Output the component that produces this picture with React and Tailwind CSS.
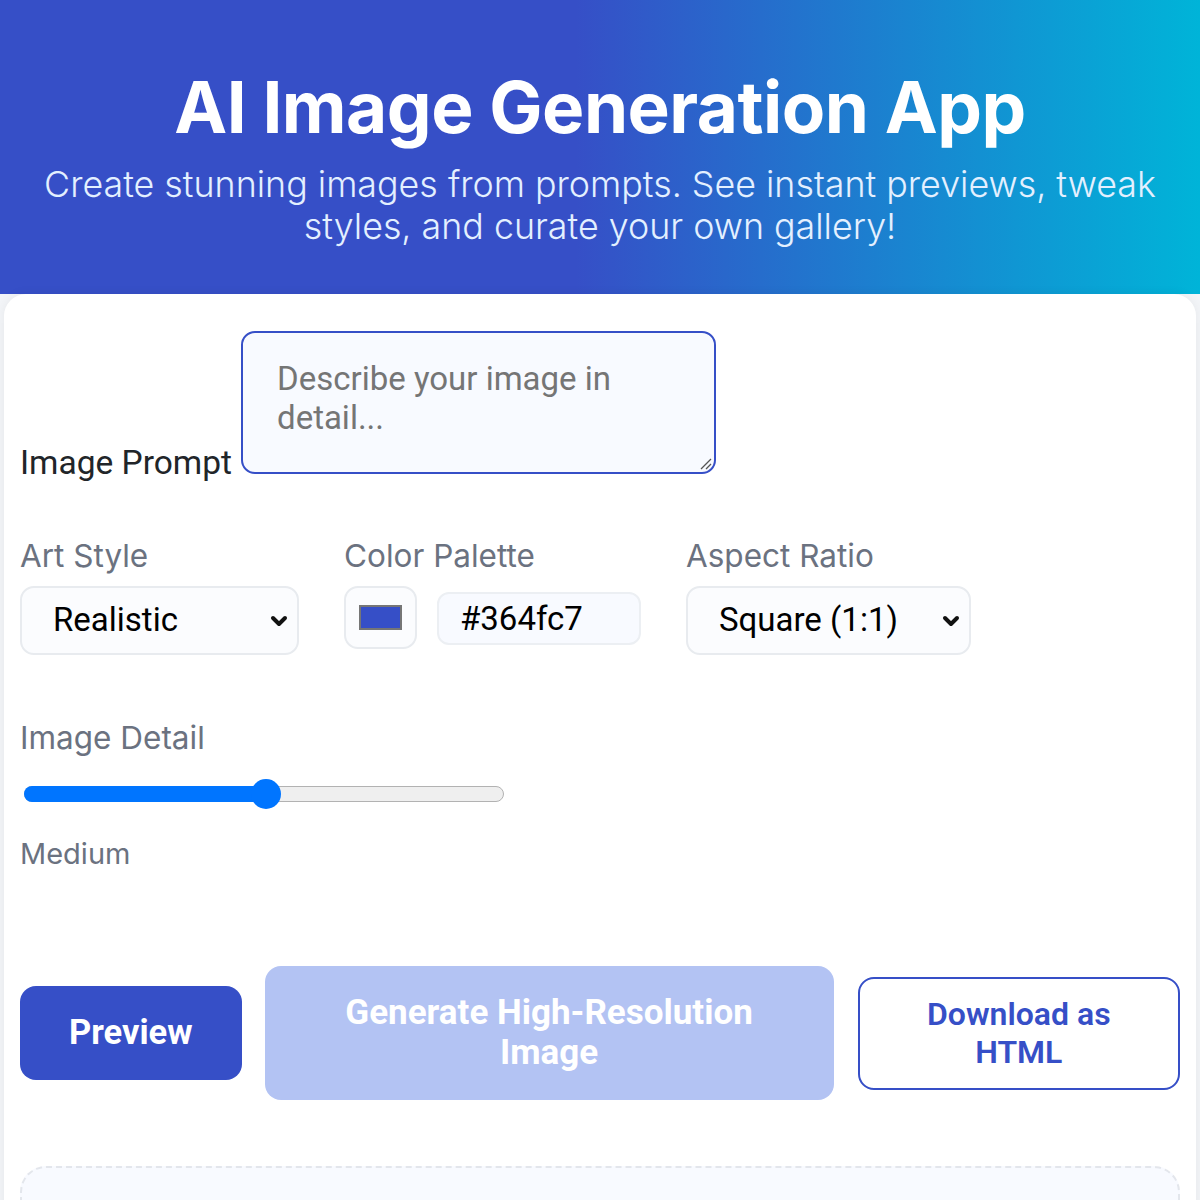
import React from "react";
import { ChevronDown } from "lucide-react";

const inter = { fontFamily: "Inter, 'Noto Sans', sans-serif" };

export default function App() {
  return (
    <div className="min-h-[1200px] bg-[#f3f5f8] font-['Inter',sans-serif]">
      <header className="h-[294px] bg-[linear-gradient(90deg,#364fc7_48%,#00b4d8_100%)] pt-[64px] text-center">
        <h1 className="text-[71px] leading-[86px] font-bold text-white tracking-[-0.5px] font-['Inter',sans-serif]">
          AI Image Generation App
        </h1>
        <p className="mt-[13px] text-[35.8px] leading-[42px] font-light text-[#e3f0ff] font-['Inter',sans-serif]">
          Create stunning images from prompts. See instant previews, tweak
          <br />
          styles, and curate your own gallery!
        </p>
      </header>

      <main className="mx-[4px] rounded-t-[22px] bg-white shadow-[0_0_12px_rgba(0,0,0,0.06)] px-[16px] pt-[37px] pb-[40px]">
        {/* Prompt */}
        <div className="flex items-end">
          <label className="text-[33.5px] leading-[38px] text-[#212529] font-['Roboto',sans-serif] mb-[-8px] mr-[9px]">
            Image Prompt
          </label>
          <div className="relative w-[475px] h-[143px] rounded-[14px] border-2 border-[#364fc7] bg-[#f8faff] px-[34px] pt-[26px]">
            <div className="text-[33px] leading-[39px] text-[#757575] font-['Roboto',sans-serif]">
              Describe your image in
              <br />
              detail...
            </div>
            <svg className="absolute right-[2px] bottom-[2px]" width="14" height="14" viewBox="0 0 14 14">
              <path d="M13 3 L3 13 M13 8 L8 13" stroke="#555" strokeWidth="1.3" />
            </svg>
          </div>
        </div>

        {/* Options row */}
        <div className="mt-[62px] flex gap-[45px]">
          <div className="flex flex-col">
            <span className="text-[31.5px] leading-[40px] text-[#6b7280]" style={inter}>Art Style</span>
            <div className="mt-[10px] flex h-[69px] w-[279px] items-center justify-between rounded-[14px] border-2 border-[#e8ebef] bg-[#fbfcfe] pl-[31px] pr-[6px]">
              <span className="text-[33px] leading-[38px] mt-[-2px] text-black font-['Roboto',sans-serif]">Realistic</span>
              <ChevronDown size={24} strokeWidth={4} color="#111" />
            </div>
          </div>

          <div className="flex flex-col">
            <span className="text-[31.5px] leading-[40px] text-[#6b7280]" style={inter}>Color Palette</span>
            <div className="mt-[10px] flex items-start gap-[20px]">
              <div className="flex h-[63px] w-[73px] items-center justify-center rounded-[14px] border-2 border-[#e8ebef] bg-[#fbfcfe]">
                <div className="h-[25px] w-[43px] border-2 border-[#767676] bg-[#364fc7]" />
              </div>
              <div className="mt-[6px] flex h-[53px] w-[204px] items-center rounded-[12px] border-2 border-[#eceff3] bg-[#f8faff] pl-[21px]">
                <span className="text-[33px] text-black font-['Roboto',sans-serif]">#364fc7</span>
              </div>
            </div>
          </div>

          <div className="flex flex-col">
            <span className="text-[31.5px] leading-[40px] text-[#6b7280]" style={inter}>Aspect Ratio</span>
            <div className="mt-[10px] flex h-[69px] w-[285px] items-center justify-between rounded-[14px] border-2 border-[#e8ebef] bg-[#fbfcfe] pl-[31px] pr-[6px]">
              <span className="text-[33px] leading-[38px] mt-[-2px] text-black font-['Roboto',sans-serif]">Square (1:1)</span>
              <ChevronDown size={24} strokeWidth={4} color="#111" />
            </div>
          </div>
        </div>

        {/* Image detail */}
        <div className="mt-[63px]">
          <div className="text-[31.5px] leading-[40px] text-[#6b7280]" style={inter}>Image Detail</div>
          <div className="relative mt-[28px] ml-[4px] h-[16px] w-[480px]">
            <div className="absolute inset-0 rounded-full border border-[#b2b2b2] bg-[#efefef]" />
            <div className="absolute left-0 top-0 h-[16px] w-[245px] rounded-full bg-[#0075ff]" />
            <div className="absolute left-[227px] top-[-7px] h-[30px] w-[30px] rounded-full bg-[#0075ff]" />
          </div>
          <div className="mt-[32px] text-[29px] leading-[40px] text-[#6b7280]" style={inter}>Medium</div>
        </div>

        {/* Buttons */}
        <div className="mt-[92px] flex items-center gap-[23px]">
          <button className="h-[94px] w-[222px] rounded-[16px] bg-[#364fc7] text-[34.5px] font-bold text-white font-['Roboto',sans-serif]">
            Preview
          </button>
          <button className="h-[134px] w-[570px] rounded-[16px] bg-[#b3c3f3] text-[35px] leading-[40px] font-bold text-white font-['Roboto',sans-serif]">
            Generate High-Resolution
            <br />
            Image
          </button>
          <button className="ml-[1px] h-[113px] w-[323px] rounded-[16px] border-2 border-[#364fc7] bg-white text-[32px] leading-[38px] font-semibold text-[#364fc7] font-['Roboto',sans-serif]">
            Download as
            <br />
            HTML
          </button>
        </div>

        {/* Gallery placeholder */}
        <div className="mt-[66px] h-[120px] rounded-[26px] border-2 border-dashed border-[#e3e6ec] bg-[#f8faff]" />
      </main>
    </div>
  );
}
